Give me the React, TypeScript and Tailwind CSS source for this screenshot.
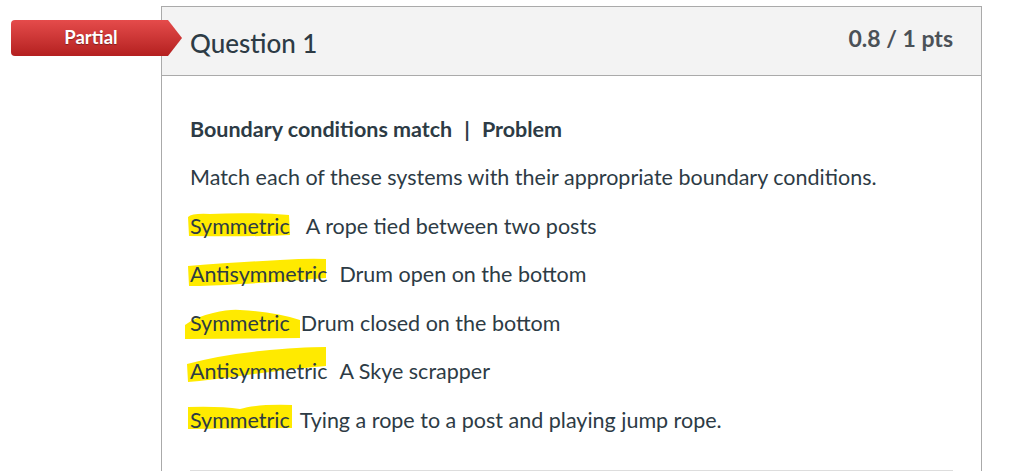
import React from 'react';

type Line = { label: string; text: string; gap: number; mark: string };

// hand-drawn highlighter strokes, local coords (svg sits at left -10, top -30 of the word)
const lines: Line[] = [
  { label: 'Symmetric', text: 'A rope tied between two posts', gap: 16, mark: 'M8,33 Q12,29 30,30 Q70,28 109,31 L110,51 Q70,53 9,52 Z' },
  { label: 'Antisymmetric', text: 'Drum open on the bottom', gap: 12, mark: 'M8,34 Q60,30 100,28 Q130,26 146,27 L146,46 Q100,50 60,52 Q30,54 9,54 Z' },
  { label: 'Symmetric', text: 'Drum closed on the bottom', gap: 11, mark: 'M5,44 Q15,36 33,32 Q50,28 60,29 Q95,31 120,39 L120,57 L5,58 Z' },
  { label: 'Antisymmetric', text: 'A Skye scrapper', gap: 12, mark: 'M7,35 Q40,26 80,22 Q120,18 146,18 L146,37 Q110,40 60,47 Q30,51 8,53 Z' },
  { label: 'Symmetric', text: 'Tying a rope to a post and playing jump rope.', gap: 10, mark: 'M8,29 Q40,28 60,31 Q75,26 112,27 L112,50 L8,51 Z' },
];

export default function App() {
  return (
    <div className="relative w-[1036px] h-[472px] overflow-hidden bg-white text-[#2d3b45] font-['Lato','Noto_Sans',sans-serif]">
      {/* Question card */}
      <div className="ml-[161px] mt-[6px] w-[821px] border border-[#aaaaaa] border-b-0">
        <div className="h-[69px] bg-[#f3f3f3] border-b border-[#aaaaaa] flex justify-between pl-[28px] pr-[28px]">
          <h2 className="text-[26px] leading-[30px] mt-[21px] font-medium">Question 1</h2>
          <span className="text-[23px] leading-[26px] mt-[18px] font-bold text-[#4b5157]">0.8 / 1 pts</span>
        </div>

        <div className="pl-[28px] pr-[28px] pt-[29px]">
          <div className="h-[48px] flex items-center text-[21.5px] font-bold">
            Boundary conditions match<span className="mx-[12px]">|</span>Problem
          </div>
          <div className="h-[48.5px] flex items-center text-[21.5px]">
            Match each of these systems with their appropriate boundary conditions.
          </div>
          {lines.map((l, i) => (
            <div key={i} className="h-[48.5px] flex items-center text-[21.5px]">
              <span className="relative inline-block leading-[24px]">
                <svg className="absolute left-[-10px] top-[-30px]" width="160" height="80" viewBox="0 0 160 80">
                  <path d={l.mark} fill="#ffea00" />
                </svg>
                <span className="relative">{l.label}</span>
              </span>
              <span style={{ marginLeft: l.gap }}>{l.text}</span>
            </div>
          ))}
          <div className="mt-[26px] border-t border-[#dddddd]" />
        </div>
      </div>

      {/* Partial badge */}
      <div className="absolute left-[11px] top-[20px] w-[171px] h-[36px] rounded-l-[4px] bg-linear-to-b from-[#e54b4b] to-[#b41f1f] [clip-path:polygon(0_0,157px_0,100%_50%,157px_100%,0_100%)] flex items-center">
        <span className="w-[160px] text-center text-white font-bold text-[18.5px] leading-[22px] mt-[-3px] [text-shadow:0_1px_1px_rgba(0,0,0,0.35)]">Partial</span>
      </div>
    </div>
  );
}
